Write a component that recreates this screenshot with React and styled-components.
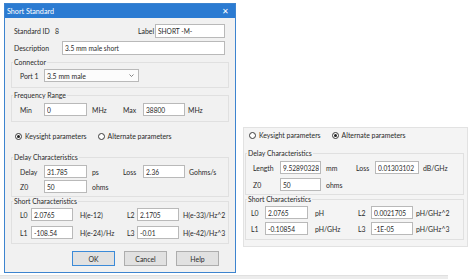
import styled, { createGlobalStyle } from "styled-components"

const GlobalStyle = createGlobalStyle`
  html, body { margin: 0; padding: 0; background: #fff; }
  body {
    font-family: Lato, "Noto Sans", sans-serif;
    font-size: 6.9px;
    color: #2a2a2a;
  }
  * { box-sizing: border-box; }
`

const Page = styled.div`
  width: 474px;
  height: 279px;
  overflow: hidden;
  display: flex;
  flex-direction: column;
`

const Top = styled.div`
  display: flex;
  align-items: flex-start;
  gap: 7px;
  padding: 3px 0 0 4px;
`

const Window = styled.div`
  width: 232px;
  height: 270px;
  border: 1px solid #3d84cf;
  background: #f1f1f1;
  display: flex;
  flex-direction: column;
`

const TitleBar = styled.div`
  height: 14px;
  flex: none;
  background: #2b7bd2;
  color: #fff;
  display: flex;
  align-items: center;
  justify-content: space-between;
  padding: 0 6px 0 2px;
  font-size: 7.2px;
`

const Close = styled.span`
  font-size: 8px;
  line-height: 1;
`

const Body = styled.div`
  padding: 6px 6px 0 6px;
  display: flex;
  flex-direction: column;
`

const LineRow = styled.div`
  display: flex;
  align-items: center;
  height: 14px;
  padding: 0 4px 0 3px;
  margin-top: ${p => p.$mt || 0}px;
`

const Caption = styled.span`
  width: ${p => p.$w}px;
  flex: none;
`

const Spacer = styled.div`
  flex: 1;
`

const Group = styled.fieldset`
  margin: ${p => p.$mt || 0}px 0 0 ${p => p.$ml || 0}px;
  padding: 0 0 ${p => p.$pb || 0}px 0;
  border: 1px solid #e0e0e0;
  min-width: 0;
`

const Legend = styled.legend`
  margin-left: 1px;
  padding: 0 1px;
  line-height: 9px;
`

const Rows = styled.div`
  display: flex;
  flex-direction: column;
  gap: ${p => p.$gap || 3}px;
  padding: ${p => p.$pt || 2}px 0 0 ${p => p.$pl || 8}px;
`

const FieldRow = styled.div`
  display: grid;
  grid-template-columns: ${p => p.$cols};
  align-items: center;
  height: 13px;
`

const Label = styled.span`
  white-space: nowrap;
`

const Unit = styled.span`
  padding-left: ${p => p.$pl || 5}px;
  white-space: nowrap;
`

const Input = styled.input`
  width: ${p => (p.$w ? p.$w + "px" : "100%")};
  flex: ${p => (p.$w ? "none" : 1)};
  height: ${p => p.$h || 13}px;
  border: 1px solid #b9b9b9;
  background: #fff;
  font-family: inherit;
  font-size: 6.6px;
  color: inherit;
  padding: 0 1px 0 2px;
  outline: none;
`

const Select = styled.div`
  height: 13px;
  border: 1px solid #b9b9b9;
  background: #fcfcfc;
  display: flex;
  align-items: center;
  justify-content: space-between;
  padding: 0 4px 0 2px;
`

const RadioRow = styled.div`
  display: flex;
  align-items: center;
  height: 10px;
  padding-left: ${p => p.$pl}px;
  margin: ${p => p.$mt}px 0 ${p => p.$mb}px;
`

const RadioItem = styled.label`
  display: flex;
  align-items: center;
  margin-right: ${p => p.$mr || 0}px;
`

const Dot = styled.span`
  width: 7px;
  height: 7px;
  border-radius: 50%;
  border: 1px solid #3a3a3a;
  background: #fff;
  margin-right: 3px;
  display: flex;
  align-items: center;
  justify-content: center;
  &::after {
    content: "";
    width: 3px;
    height: 3px;
    border-radius: 50%;
    background: ${p => (p.$on ? "#222" : "transparent")};
  }
`

const Buttons = styled.div`
  display: flex;
  justify-content: flex-end;
  gap: 9px;
  padding-right: 10px;
  margin-top: 7px;
`

const Button = styled.button`
  width: 43px;
  height: 15px;
  background: #e1e1e1;
  border: 1px solid ${p => (p.$primary ? "#3b8ad8" : "#adadad")};
  font: inherit;
  color: inherit;
  padding: 0;
`

const Panel = styled.div`
  width: 225px;
  height: 120px;
  margin-top: 124px;
  border: 1px solid #e2e2e2;
  background: #f4f4f4;
  display: flex;
  flex-direction: column;
  padding-right: 3px;
`

const Strip = styled.div`
  width: 448px;
  height: 4px;
  margin-top: 2px;
  background: #ececec;
  border-top: 1px solid #e0e0e0;
`

const Chevron = () => (
  <svg width="5" height="3" viewBox="0 0 5 3">
    <path d="M0.5 0.5 L2.5 2.5 L4.5 0.5" fill="none" stroke="#666" strokeWidth="0.8" />
  </svg>
)

const Radio = ({ on, children, mr }) => (
  <RadioItem $mr={mr}>
    <Dot $on={on} />
    {children}
  </RadioItem>
)

const FREQ_COLS = "24px 43px 36px 20px 42px auto"
const SHORT_COLS = "11px 42px 54px 10px 42px auto"
const ALT_DELAY_COLS = "27px 41px 35px 19px 44px auto"
const ALT_SHORT_COLS = "14px 43px 50px 13px 42px auto"

const App = () => {
  return (
    <Page>
      <GlobalStyle />
      <Top>
        <Window>
          <TitleBar>
            <span>Short Standard</span>
            <Close>✕</Close>
          </TitleBar>
          <Body>
            <LineRow>
              <Caption $w={41}>Standard ID</Caption>
              <span>8</span>
              <Spacer />
              <Caption $w={17}>Label</Caption>
              <Input $w={70} $h={14} defaultValue="SHORT -M-" />
            </LineRow>
            <LineRow $mt={3}>
              <Caption $w={48}>Description</Caption>
              <Input $h={14} defaultValue="3.5 mm male short" />
            </LineRow>

            <Group $mt={3} $pb={5}>
              <Legend>Connector</Legend>
              <Rows>
                <FieldRow $cols="24px 95px">
                  <Label>Port 1</Label>
                  <Select>
                    <span>3.5 mm male</span>
                    <Chevron />
                  </Select>
                </FieldRow>
              </Rows>
            </Group>

            <Group $mt={3} $pb={5}>
              <Legend>Frequency Range</Legend>
              <Rows $pt={3}>
                <FieldRow $cols={FREQ_COLS}>
                  <Label>Min</Label>
                  <Input defaultValue="0" />
                  <Unit>MHz</Unit>
                  <Label>Max</Label>
                  <Input defaultValue="38800" />
                  <Unit $pl={3}>MHz</Unit>
                </FieldRow>
              </Rows>
            </Group>

            <RadioRow $pl={4} $mt={9} $mb={12}>
              <Radio on mr={11}>Keysight parameters</Radio>
              <Radio>Alternate parameters</Radio>
            </RadioRow>

            <Group $pb={3}>
              <Legend>Delay Characteristics</Legend>
              <Rows $pt={3} $gap={2}>
                <FieldRow $cols={FREQ_COLS}>
                  <Label>Delay</Label>
                  <Input defaultValue="31.785" />
                  <Unit>ps</Unit>
                  <Label>Loss</Label>
                  <Input defaultValue="2.36" />
                  <Unit $pl={4}>Gohms/s</Unit>
                </FieldRow>
                <FieldRow $cols={FREQ_COLS}>
                  <Label>Z0</Label>
                  <Input defaultValue="50" />
                  <Unit>ohms</Unit>
                </FieldRow>
              </Rows>
            </Group>

            <Group $pb={4}>
              <Legend>Short Characteristics</Legend>
              <Rows $pt={2} $gap={5}>
                <FieldRow $cols={SHORT_COLS}>
                  <Label>L0</Label>
                  <Input defaultValue="2.0765" />
                  <Unit $pl={7}>H(e-12)</Unit>
                  <Label>L2</Label>
                  <Input defaultValue="2.1705" />
                  <Unit $pl={4}>H(e-33)/Hz^2</Unit>
                </FieldRow>
                <FieldRow $cols={SHORT_COLS}>
                  <Label>L1</Label>
                  <Input defaultValue="-108.54" />
                  <Unit $pl={7}>H(e-24)/Hz</Unit>
                  <Label>L3</Label>
                  <Input defaultValue="-0.01" />
                  <Unit $pl={4}>H(e-42)/Hz^3</Unit>
                </FieldRow>
              </Rows>
            </Group>

            <Buttons>
              <Button $primary>OK</Button>
              <Button>Cancel</Button>
              <Button>Help</Button>
            </Buttons>
          </Body>
        </Window>

        <Panel>
          <RadioRow $pl={5} $mt={2} $mb={9}>
            <Radio mr={11}>Keysight parameters</Radio>
            <Radio on>Alternate parameters</Radio>
          </RadioRow>

          <Group $ml={1} $pb={3}>
            <Legend>Delay Characteristics</Legend>
            <Rows $pt={3} $gap={4} $pl={7}>
              <FieldRow $cols={ALT_DELAY_COLS}>
                <Label>Length</Label>
                <Input defaultValue="9.52890328" />
                <Unit>mm</Unit>
                <Label>Loss</Label>
                <Input defaultValue="0.01303102" />
                <Unit $pl={4}>dB/GHz</Unit>
              </FieldRow>
              <FieldRow $cols={ALT_DELAY_COLS}>
                <Label>Z0</Label>
                <Input defaultValue="50" />
                <Unit>ohms</Unit>
              </FieldRow>
            </Rows>
          </Group>

          <Group $ml={1} $pb={4}>
            <Legend>Short Characteristics</Legend>
            <Rows $pt={2} $gap={3} $pl={5}>
              <FieldRow $cols={ALT_SHORT_COLS}>
                <Label>L0</Label>
                <Input defaultValue="2.0765" />
                <Unit $pl={7}>pH</Unit>
                <Label>L2</Label>
                <Input defaultValue="0.0021705" />
                <Unit $pl={3}>pH/GHz^2</Unit>
              </FieldRow>
              <FieldRow $cols={ALT_SHORT_COLS}>
                <Label>L1</Label>
                <Input defaultValue="-0.10854" />
                <Unit $pl={7}>pH/GHz</Unit>
                <Label>L3</Label>
                <Input defaultValue="-1E-05" />
                <Unit $pl={3}>pH/GHz^3</Unit>
              </FieldRow>
            </Rows>
          </Group>
        </Panel>
      </Top>
      <Strip />
    </Page>
  )
}

export default App
